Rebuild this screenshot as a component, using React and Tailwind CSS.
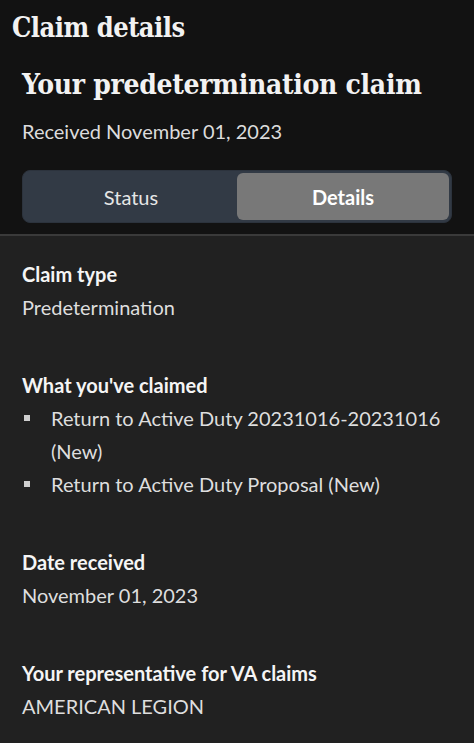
import { useState } from 'react';

const serif = "font-['DejaVu_Serif_Condensed','DejaVu_Serif',serif]";
const sans = "font-['Lato',sans-serif]";

function Section({ title, children }) {
  return (
    <div className="mb-[45px]">
      <h3 className={`${sans} text-[20px] leading-[33px] font-bold text-[#f5f5f5]`}>{title}</h3>
      {children}
    </div>
  );
}

export default function App() {
  const [tab, setTab] = useState('details');

  return (
    <div className={`min-h-[743px] bg-[#212121] ${sans}`}>
      {/* Header */}
      <div className="bg-[#121212] pb-[11px] border-b-2 border-[#3a3a3a]">
        <h1 className={`${serif} font-bold text-[27px] tracking-[-0.5px] leading-[56px] text-[#f2f2f2] pl-3`}>
          Claim details
        </h1>
        <div className="px-[22px]">
          <h2 className={`${serif} font-bold text-[28px] tracking-[-0.3px] leading-[40px] text-[#f2f2f2] mt-[9px]`}>
            Your predetermination claim
          </h2>
          <p className="text-[20px] leading-[30px] text-[#dcdcdc] mt-[11px]">Received November 01, 2023</p>
          <div className="mt-[24px] flex rounded-lg bg-[#323a45] border border-[#2c333d] p-[2px] h-[53px]">
            <button
              onClick={() => setTab('status')}
              className={`flex-1 rounded-md text-[20px] ${tab === 'status' ? 'bg-[#787878] font-bold text-white' : 'text-[#e6e6e6]'}`}
            >
              Status
            </button>
            <button
              onClick={() => setTab('details')}
              className={`flex-1 rounded-md text-[20px] ${tab === 'details' ? 'bg-[#787878] font-bold text-white' : 'text-[#e6e6e6]'}`}
            >
              Details
            </button>
          </div>
        </div>
      </div>

      {/* Details */}
      <div className="px-[22px] pt-[22px] text-[20px] leading-[33px] text-[#dedede]">
        <Section title="Claim type">
          <p>Predetermination</p>
        </Section>
        <Section title="What you've claimed">
          <ul>
            <li className="flex">
              <span className="w-[29px] shrink-0 pt-[13px] pl-[2px]">
                <span className="block w-[6px] h-[6px] bg-[#cfcfcf]"></span>
              </span>
              <span>Return to Active Duty 20231016-20231016 (New)</span>
            </li>
            <li className="flex">
              <span className="w-[29px] shrink-0 pt-[13px] pl-[2px]">
                <span className="block w-[6px] h-[6px] bg-[#cfcfcf]"></span>
              </span>
              <span>Return to Active Duty Proposal (New)</span>
            </li>
          </ul>
        </Section>
        <Section title="Date received">
          <p>November 01, 2023</p>
        </Section>
        <Section title="Your representative for VA claims">
          <p>AMERICAN LEGION</p>
        </Section>
      </div>
    </div>
  );
}
